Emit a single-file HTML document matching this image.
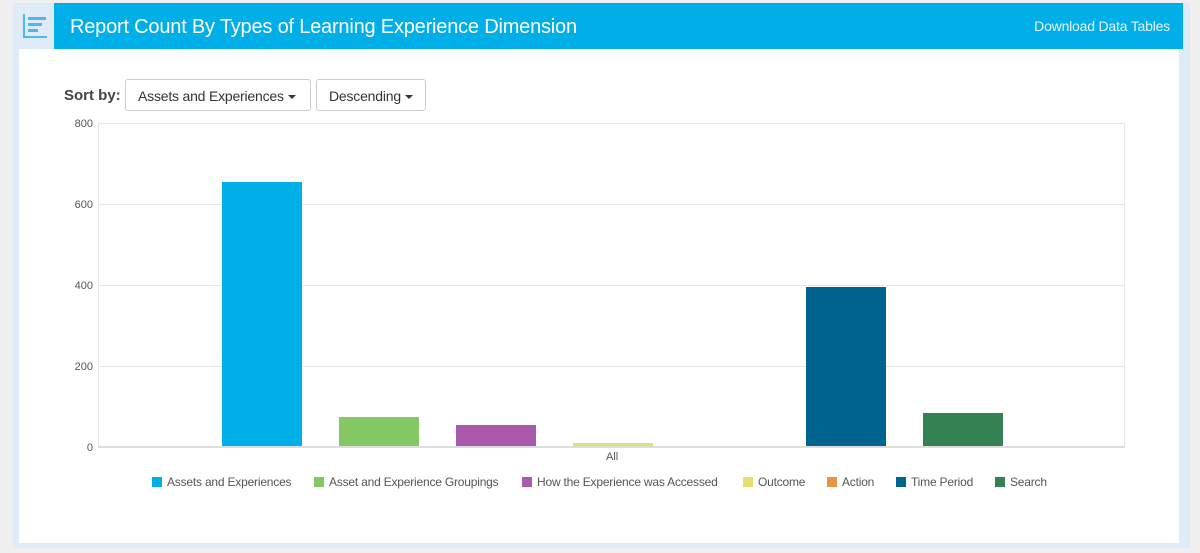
<!DOCTYPE html>
<html><head><meta charset="utf-8"><style>
body{margin:0;width:1200px;height:553px;background:#f0f0f0;font-family:"Liberation Sans",sans-serif;position:relative;overflow:hidden}
.a{position:absolute}
.lg{position:absolute;top:476px;font-size:12px;color:#555;line-height:12px;letter-spacing:-0.2px}
.sq{position:absolute;top:477px;width:10px;height:10px}
.btn{position:absolute;top:79px;height:32px;border:1px solid #ccc;border-radius:3px;background:#fff;font-size:14px;color:#333;line-height:32px;box-sizing:border-box;padding-left:12px;letter-spacing:-0.2px}
.car{display:inline-block;width:0;height:0;border-left:4px solid transparent;border-right:4px solid transparent;border-top:4px solid #333;vertical-align:middle;margin-left:4px}
.gl{position:absolute;left:98px;width:1027px;height:1px;background:#e6e6e6}
.yl{position:absolute;left:50px;width:43px;text-align:right;font-size:11px;color:#555}
.bar{position:absolute;width:80px}
</style></head><body>
<div class="a" style="left:13px;top:3px;width:1177px;height:545px;background:#dfecf8"></div>
<div class="a" style="left:19px;top:49px;width:1160px;height:494px;background:#fff"></div>
<div class="a" style="left:54px;top:3px;width:1129px;height:46px;background:#00aee8"></div>
<svg class="a" style="left:22px;top:13px" width="26" height="26"><rect x="1" y="1" width="2" height="24" fill="#4fb8ea"/><rect x="1" y="23" width="24" height="2" fill="#4fb8ea"/><rect x="6" y="4" width="18" height="3" fill="#4fb8ea"/><rect x="6" y="10" width="14" height="3" fill="#4fb8ea"/><rect x="6" y="16" width="10" height="3" fill="#4fb8ea"/></svg>
<div class="a" style="left:70px;top:16px;font-size:20px;color:#fff;letter-spacing:-0.2px">Report Count By Types of Learning Experience Dimension</div>
<div class="a" style="right:30px;top:18px;font-size:14px;color:#e6f4fc;letter-spacing:-0.2px">Download Data Tables</div>
<div class="a" style="left:64px;top:87px;font-size:15px;font-weight:bold;color:#444">Sort by:</div>
<div class="btn" style="left:125px;width:186px">Assets and Experiences<span class="car"></span></div>
<div class="btn" style="left:316px;width:110px">Descending<span class="car"></span></div>
<div class="gl" style="top:123px"></div><div class="gl" style="top:204px"></div><div class="gl" style="top:285px"></div><div class="gl" style="top:366px"></div>
<div class="gl" style="top:446px;height:2px;background:#ddd"></div>
<div class="a" style="left:98px;top:123px;width:1px;height:324px;background:#e6e6e6"></div>
<div class="a" style="left:1124px;top:123px;width:1px;height:324px;background:#e6e6e6"></div>
<div class="yl" style="top:118px">800</div><div class="yl" style="top:199px">600</div><div class="yl" style="top:280px">400</div><div class="yl" style="top:361px">200</div><div class="yl" style="top:442px">0</div>
<div class="bar" style="left:222px;top:182px;height:264px;background:#00aee8"></div>
<div class="bar" style="left:339px;top:417px;height:29px;background:#84c765"></div>
<div class="bar" style="left:456px;top:425px;height:21px;background:#aa59ac"></div>
<div class="bar" style="left:573px;top:443px;height:3px;background:#e8de6c"></div>
<div class="bar" style="left:806px;top:287px;height:159px;background:#00658e"></div>
<div class="bar" style="left:923px;top:413px;height:33px;background:#348154"></div>
<div class="a" style="left:606px;top:451px;font-size:11px;color:#555">All</div>
<div class="sq" style="left:152px;background:#00aee8"></div><div class="lg" style="left:167px">Assets and Experiences</div>
<div class="sq" style="left:314px;background:#84c765"></div><div class="lg" style="left:329px">Asset and Experience Groupings</div>
<div class="sq" style="left:522px;background:#aa59ac"></div><div class="lg" style="left:537px">How the Experience was Accessed</div>
<div class="sq" style="left:743px;background:#e8de6c"></div><div class="lg" style="left:758px">Outcome</div>
<div class="sq" style="left:827px;background:#e69545"></div><div class="lg" style="left:842px">Action</div>
<div class="sq" style="left:896px;background:#00658e"></div><div class="lg" style="left:911px">Time Period</div>
<div class="sq" style="left:995px;background:#348154"></div><div class="lg" style="left:1010px">Search</div>
</body></html>
